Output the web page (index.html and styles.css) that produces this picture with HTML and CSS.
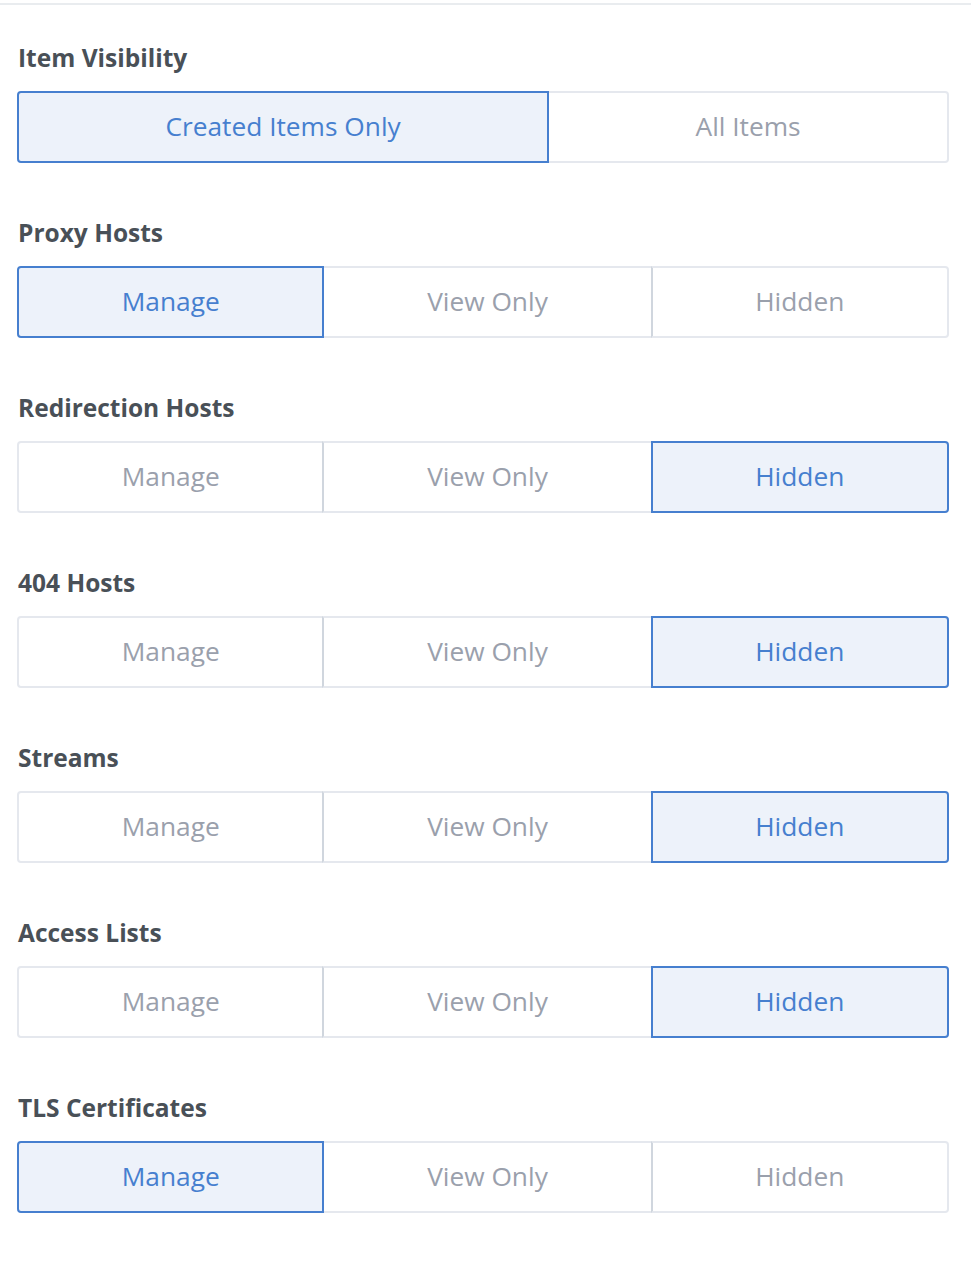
FILE: index.html
```html
<!DOCTYPE html>
<html>
<head>
<meta charset="utf-8">
<link rel="stylesheet" href="styles.css">
</head>
<body>
<div class="panel">
  <div class="field">
    <div class="label">Item Visibility</div>
    <div class="group">
      <div class="btn active">Created Items Only</div>
      <div class="btn">All Items</div>
    </div>
  </div>
  <div class="field">
    <div class="label">Proxy Hosts</div>
    <div class="group">
      <div class="btn active">Manage</div>
      <div class="btn">View Only</div>
      <div class="btn">Hidden</div>
    </div>
  </div>
  <div class="field">
    <div class="label">Redirection Hosts</div>
    <div class="group">
      <div class="btn">Manage</div>
      <div class="btn">View Only</div>
      <div class="btn active">Hidden</div>
    </div>
  </div>
  <div class="field">
    <div class="label">404 Hosts</div>
    <div class="group">
      <div class="btn">Manage</div>
      <div class="btn">View Only</div>
      <div class="btn active">Hidden</div>
    </div>
  </div>
  <div class="field">
    <div class="label">Streams</div>
    <div class="group">
      <div class="btn">Manage</div>
      <div class="btn">View Only</div>
      <div class="btn active">Hidden</div>
    </div>
  </div>
  <div class="field">
    <div class="label">Access Lists</div>
    <div class="group">
      <div class="btn">Manage</div>
      <div class="btn">View Only</div>
      <div class="btn active">Hidden</div>
    </div>
  </div>
  <div class="field">
    <div class="label">TLS Certificates</div>
    <div class="group">
      <div class="btn active">Manage</div>
      <div class="btn">View Only</div>
      <div class="btn">Hidden</div>
    </div>
  </div>
</div>
</body>
</html>
```
FILE: styles.css
```css
html, body {
  margin: 0;
  padding: 0;
  background: #ffffff;
}
body {
  font-family: "Open Sans", "Noto Sans", sans-serif;
}
.panel {
  margin-top: 3px;
  border-top: 2px solid #e9ecef;
  padding: 35px 22px 0 17px;
}
.field {
  margin-bottom: 52px;
}
.label {
  font-size: 24.5px;
  font-weight: 700;
  color: #495057;
  line-height: 36px;
  height: 36px;
  padding-left: 1px;
  margin-bottom: 15px;
}
.group {
  display: flex;
  height: 72px;
}
.btn {
  flex: 1 1 auto;
  display: flex;
  align-items: center;
  justify-content: center;
  box-sizing: border-box;
  height: 72px;
  padding-bottom: 3px;
  border: 2px solid #e5e8ee;
  font-size: 26.3px;
  color: #9aa0ac;
  background: #ffffff;
  position: relative;
}
.btn + .btn {
  margin-left: -2px;
  border-left-color: #d0d6de;
}
.btn:first-child {
  border-radius: 4px 0 0 4px;
}
.btn:last-child {
  border-radius: 0 4px 4px 0;
}
.btn.active {
  border-color: #467fcf;
  background: #edf2fa;
  color: #467fcf;
  z-index: 1;
}
```
